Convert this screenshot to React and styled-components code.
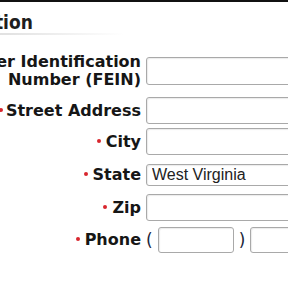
import React from "react";
import styled, { createGlobalStyle } from "styled-components";

const GlobalStyle = createGlobalStyle`
  html, body { margin: 0; padding: 0; background: #ffffff; overflow: hidden; }
  * { box-sizing: border-box; }
`;

const TopRule = styled.div`
  height: 2px;
  background: #111111;
`;

const Section = styled.section`
  margin-left: -170px;
  width: 470px;
`;

const Heading = styled.h2`
  margin: 10px 0 0 -7px;
  font-family: "DejaVu Sans Condensed", "DejaVu Sans", sans-serif;
  font-weight: bold;
  font-size: 19px;
  line-height: 21px;
  color: #1e1e1e;
  white-space: nowrap;
`;

const Divider = styled.div`
  width: 295px;
  height: 2px;
  background: linear-gradient(to right, #d6d6d6 0%, #e2e2e2 60%, rgba(255,255,255,0) 100%);
`;

const Form = styled.div`
  padding-left: 91px;
  padding-top: 18px;
`;

const Row = styled.div`
  display: grid;
  grid-template-columns: 220px auto;
  column-gap: 5px;
  align-items: center;
  margin-top: ${(p) => p.$space || 0}px;
`;

const Label = styled.label`
  font-family: "DejaVu Sans", Verdana, sans-serif;
  font-weight: bold;
  font-size: 16px;
  line-height: 18px;
  color: #161616;
  text-align: right;
`;

const Required = styled.span`
  display: inline-block;
  width: 4px;
  height: 4px;
  border-radius: 50%;
  background: #d8262e;
  margin-right: ${(p) => p.$tight ? 3 : 5}px;
  vertical-align: 4px;
`;

const TextBox = styled.input`
  display: block;
  width: ${(p) => p.$w || 220}px;
  height: ${(p) => p.$h || 27}px;
  border: 1px solid #a9a9a9;
  border-radius: 3px;
  box-shadow: inset 1px 1px 1px rgba(0, 0, 0, 0.08);
  padding: 0 5px;
  font-family: "Liberation Sans", Arial, sans-serif;
  font-size: 16px;
  color: #222222;
  background: #ffffff;
  outline: none;
`;

const PhoneGroup = styled.div`
  display: flex;
  align-items: center;
  gap: 5px;
`;

const Paren = styled.span`
  font-family: "DejaVu Sans", sans-serif;
  font-size: 17px;
  line-height: 20px;
  color: #20243a;
`;

function Field({ label, required = true, tight, children, space }) {
  return (
    <Row $space={space}>
      <Label>
        {required && <Required $tight={tight} />}
        {label}
      </Label>
      {children}
    </Row>
  );
}

export default function App() {
  return (
    <>
      <GlobalStyle />
      <TopRule />
      <Section>
        <Heading>Employer Information</Heading>
        <Divider />
        <Form>
          <Field label="Employer Identification Number (FEIN)" required={false}>
            <TextBox $h={28} />
          </Field>
          <Field label="Street Address" space={8} tight>
            <TextBox />
          </Field>
          <Field label="City" space={4}>
            <TextBox />
          </Field>
          <Field label="State" space={9}>
            <TextBox $h={22} defaultValue="West Virginia" readOnly />
          </Field>
          <Field label="Zip" space={8}>
            <TextBox />
          </Field>
          <Field label="Phone" space={6}>
            <PhoneGroup>
              <Paren>(</Paren>
              <TextBox $w={76} $h={26} />
              <Paren>)</Paren>
              <TextBox $w={120} $h={26} />
            </PhoneGroup>
          </Field>
        </Form>
      </Section>
    </>
  );
}
